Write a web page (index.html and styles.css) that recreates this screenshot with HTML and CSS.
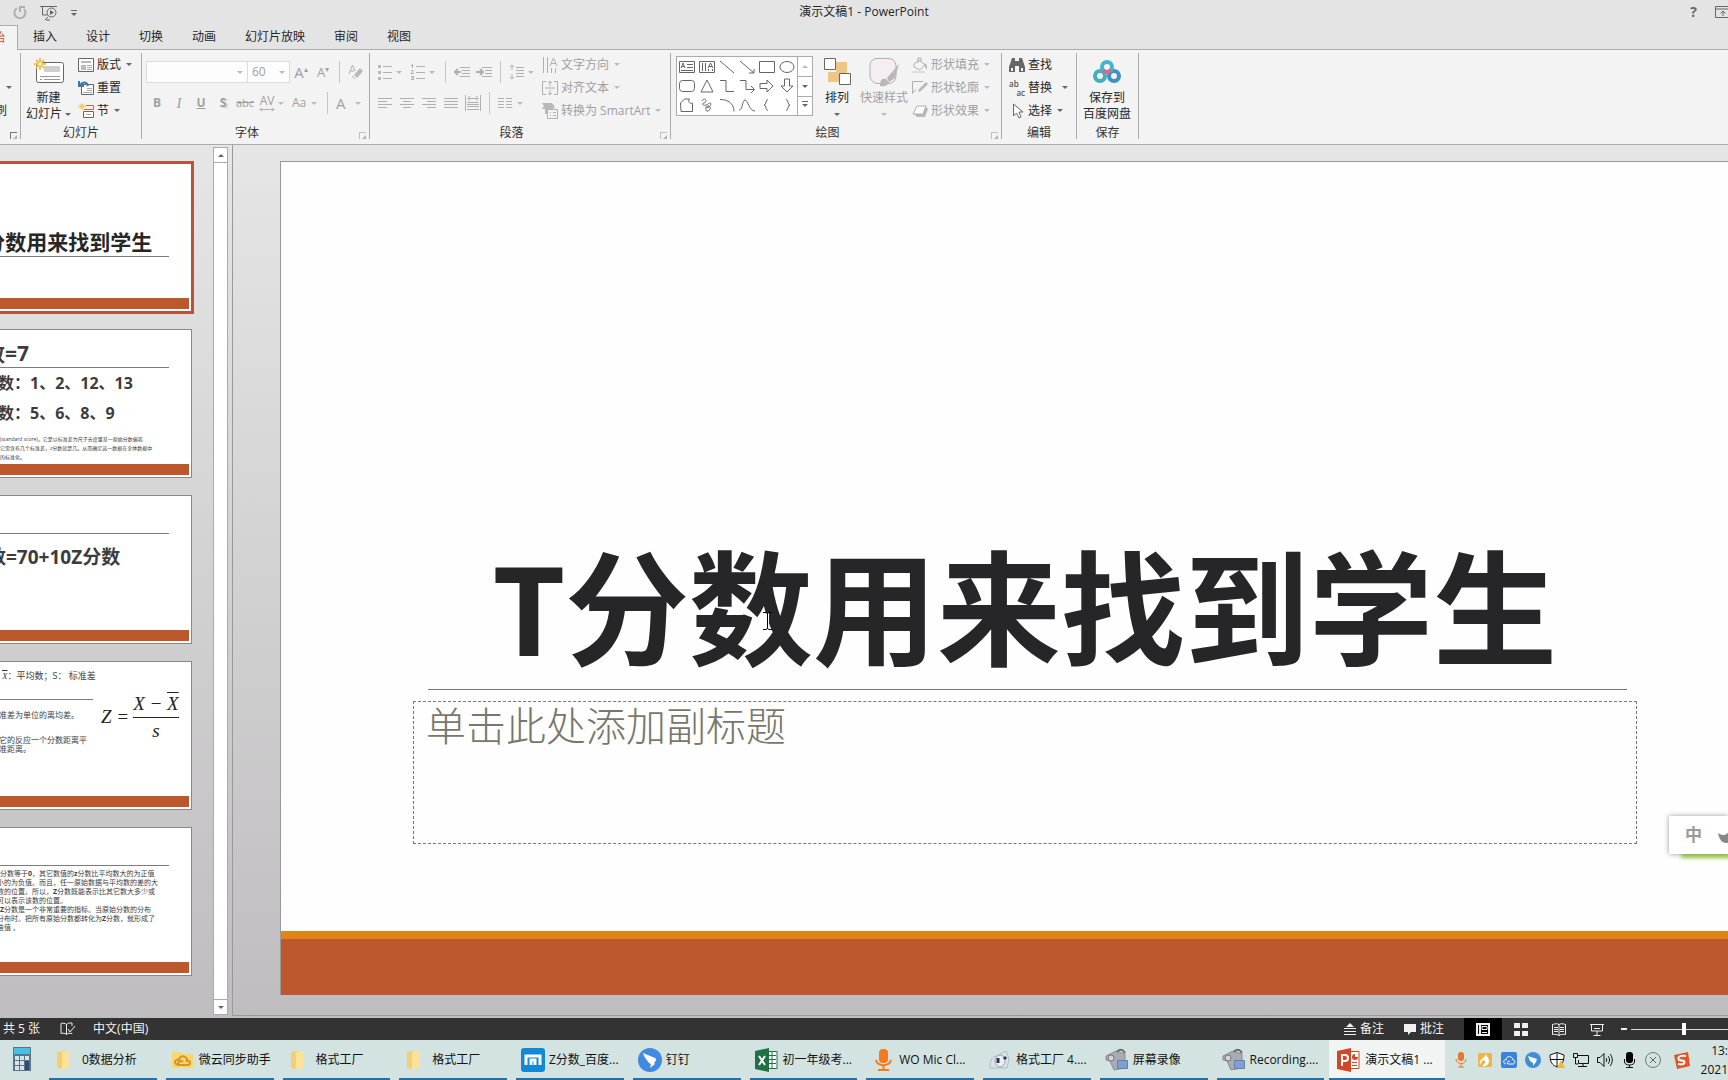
FILE: index.html
```html
<!DOCTYPE html>
<html lang="zh-CN">
<head>
  <meta charset="UTF-8" />
  <meta name="viewport" content="width=device-width, initial-scale=1" />
  <title>演示文稿1 - PowerPoint</title>
  <link rel="stylesheet" href="styles.css">
</head>
<body>
  <header class="titlebar">
    <div class="quick">
      <button aria-label="重复"><svg class="faded" width="16" height="16" viewBox="0 0 16 16"><path d="M5 3A5.500 5.500 0 1 0 12 4" stroke-width="2"/><path d="M8 7V2h5" stroke-width="2"/></svg></button>
      <button aria-label="从头开始"><svg width="18" height="16" viewBox="0 0 18 16"><path d="M0 1.500h17M2.500 2v8h5M5 15l3-3M10 15h-4"/><circle cx="11.500" cy="7.500" r="4.500"/><path class="fill" d="M10 5l4 2.500-4 2.500z"/></svg></button>
      <button aria-label="自定义快速访问工具栏"><svg width="8" height="8" viewBox="0 0 8 8"><path d="M1 1.500h6"/><path class="fill" d="M1 4h6l-3 3z"/></svg></button>
    </div>
    <div class="doc-name">演示文稿1 - PowerPoint</div>
    <div class="window-tools">
      <button class="help" aria-label="帮助">?</button>
      <button aria-label="功能区显示选项"><svg width="16" height="12" viewBox="0 0 16 12"><path d="M.5 .5h15v11H.5zM0 3h16M8 10V5M5.500 7.500L8 5l2.500 2.500"/></svg></button>
    </div>
  </header>

  <nav class="tabs">
    <a href="#" class="active">开始</a>
    <a href="#">插入</a>
    <a href="#">设计</a>
    <a href="#">切换</a>
    <a href="#">动画</a>
    <a href="#">幻灯片放映</a>
    <a href="#">审阅</a>
    <a href="#">视图</a>
  </nav>

  <div class="ribbon">
    <section class="group g-clip">
      <div class="group-body">
        <div class="rows">
          <span></span>
          <button class="cmd" aria-label="复制"><i class="caret"></i></button>
          <button class="cmd brush">格式刷</button>
        </div>
      </div>
      <button class="launcher dark" aria-label="剪贴板选项"></button>
    </section>

    <section class="group g-slides">
      <div class="group-body">
        <button class="big">
          <svg width="32" height="32" viewBox="0 0 32 32"><rect x="3.500" y="6.500" width="27" height="20" rx="2" fill="#fff"/><path fill="#cfcfcf" stroke="none" d="M11 10h16v6H11z"/><path stroke="#999" d="M7 20.500h20M7 23.500h2m2 0h16"/><path stroke="#f0c454" stroke-width="2" d="M7 2v12M1 8h12M3 4l8 8M11 4l-8 8"/><circle cx="7" cy="8" r="2" fill="#fff" stroke="#f0c454"/></svg>
          <span>新建</span>
          <span>幻灯片<i class="caret"></i></span>
        </button>
        <div class="rows">
          <button class="cmd"><svg width="16" height="16" viewBox="0 0 16 16"><path fill="#fff" d="M.5 1.500h15v13H.5z"/><path fill="#bbb" stroke="none" d="M3 4h10v2H3zM3 8h5v5H3z"/><path stroke="#aaa" d="M9 8.500h5M9 10.500h5M9 12.500h5"/></svg>版式<i class="caret"></i></button>
          <button class="cmd"><svg width="16" height="16" viewBox="0 0 16 16"><path fill="#fff" d="M3.500 4.500h12v10h-12z"/><path stroke="#aaa" d="M9 8.500h5M9 10.500h5M5 12.500h9"/><path stroke="#3f76a6" stroke-width="2" d="M10 6C9 2 5 1 2 5M1 1v5h5"/></svg>重置</button>
          <button class="cmd"><svg width="16" height="16" viewBox="0 0 16 16"><path stroke="#f0c454" d="M4 0v7M0 3.500h8M1.500 1l5 5M6.500 1l-5 5"/><path stroke="#c8673c" d="M8 2.500h7.500v4H6"/><path fill="#fff" d="M5.500 8.500h10v6h-10z"/><path stroke="#aaa" d="M8 11.500h5"/></svg>节<i class="caret"></i></button>
        </div>
      </div>
      <h2>幻灯片</h2>
    </section>

    <section class="group g-font has-launcher off">
      <div class="tool-lines">
        <div class="tools">
          <span class="combo font-name"><select aria-label="字体"><option></option></select><i class="caret"></i></span>
          <span class="combo font-size"><select aria-label="字号"><option>60</option></select><i class="caret"></i></span>
          <button class="tb glyph-lg" aria-label="增大字号">A<sup>▴</sup></button>
          <button class="tb glyph-md" aria-label="减小字号">A<sup>▾</sup></button>
          <i class="sep"></i>
          <button class="tb" aria-label="清除格式"><svg width="16" height="16" viewBox="0 0 16 16"><path d="M1 10L4.500 1 7 7M2.500 7H6"/><path class="fill" d="M6 11l6-7 3 3-6 7z"/><path d="M4 12l3 3"/></svg></button>
        </div>
        <div class="tools">
          <button class="tb"><b>B</b></button>
          <button class="tb serif"><em>I</em></button>
          <button class="tb"><b><u>U</u></b></button>
          <button class="tb shadow"><b>S</b></button>
          <button class="tb small"><s>abc</s></button>
          <button class="tb wide av" aria-label="字符间距"><span>AV<svg width="16" height="5" viewBox="0 0 16 5"><path d="M1 2.500h14M3 .5l-2 2 2 2M13 .5l2 2-2 2"/></svg></span><i class="caret"></i></button>
          <button class="tb wide"><span>Aa</span><i class="caret"></i></button>
          <i class="sep"></i>
          <button class="tb wide glyph-lg"><span>A</span><i class="caret"></i></button>
        </div>
      </div>
      <h2>字体</h2>
      <button class="launcher" aria-label="字体选项"></button>
    </section>

    <section class="group g-para has-launcher off">
      <div class="group-body">
        <div class="tool-lines">
          <div class="tools">
            <button class="tb wide" aria-label="项目符号"><svg width="16" height="16" viewBox="0 0 16 16"><path d="M6 2.500h9M6 8.500h9M6 14.500h9"/><path class="fill" d="M1 1h3v3H1zM1 7h3v3H1zM1 13h3v3H1z"/></svg><i class="caret"></i></button>
            <button class="tb wide" aria-label="编号"><svg width="16" height="16" viewBox="0 0 16 16"><path d="M6 2.500h9M6 8.500h9M6 14.500h9M2.500 0v4M1 1.500h1M1 6.500h2v1L1 9.500h3M1 12.500h2.500v3H1M1.500 14H3"/></svg><i class="caret"></i></button>
            <i class="sep"></i>
            <button class="tb" aria-label="降低列表级别"><svg width="16" height="16" viewBox="0 0 16 16"><path d="M6 3.500h10M8 6.500h8M8 9.500h8M6 12.500h10"/><path stroke-width="2" d="M1 8h6M4 5L1 8l3 3"/></svg></button>
            <button class="tb" aria-label="提高列表级别"><svg width="16" height="16" viewBox="0 0 16 16"><path d="M6 3.500h10M9 6.500h7M9 9.500h7M6 12.500h10"/><path stroke-width="2" d="M0 8h6M4 5l3 3-3 3"/></svg></button>
            <i class="sep"></i>
            <button class="tb wide" aria-label="行距"><svg width="16" height="16" viewBox="0 0 16 16"><path d="M7 3.500h8M7 6.500h8M7 9.500h8M7 12.500h8M3 1v5M1 3l2-2 2 2M3 10v5M1 13l2 2 2-2"/></svg><i class="caret"></i></button>
          </div>
          <div class="tools">
            <button class="tb" aria-label="左对齐"><svg width="14" height="12" viewBox="0 0 14 12"><path d="M0 1.500h14M0 4.500h9M0 7.500h14M0 10.500h9"/></svg></button>
            <button class="tb" aria-label="居中"><svg width="14" height="12" viewBox="0 0 14 12"><path d="M0 1.500h14M3 4.500h8M0 7.500h14M3 10.500h8"/></svg></button>
            <button class="tb" aria-label="右对齐"><svg width="14" height="12" viewBox="0 0 14 12"><path d="M0 1.500h14M5 4.500h9M0 7.500h14M5 10.500h9"/></svg></button>
            <button class="tb" aria-label="两端对齐"><svg width="14" height="12" viewBox="0 0 14 12"><path d="M0 1.500h14M0 4.500h14M0 7.500h14M0 10.500h14"/></svg></button>
            <button class="tb" aria-label="分散对齐"><svg width="16" height="16" viewBox="0 0 16 16"><path d="M.5 0v16M15.500 0v16M2 7.500h12M2 9.500h12M2 11.500h12M2 14.500h12M3 3.500h10M5 1L3 3.500 5 6M11 1l2 2.500L11 6"/></svg></button>
            <i class="sep"></i>
            <button class="tb wide" aria-label="分栏"><svg width="14" height="12" viewBox="0 0 14 12"><path d="M0 1.500h6M8 1.500h6M0 4.500h6M8 4.500h6M0 7.500h6M8 7.500h6M0 10.500h6M8 10.500h6"/></svg><i class="caret"></i></button>
          </div>
        </div>
        <div class="rows">
          <button class="cmd"><svg width="16" height="16" viewBox="0 0 16 16"><path d="M1.500 0v16M5.500 0v16M9.500 11v5M13.500 11v5M8 9l3.500-8L15 9M9 6.500h5"/></svg>文字方向<i class="caret"></i></button>
          <button class="cmd"><svg width="16" height="16" viewBox="0 0 16 16"><path d="M4 1.500H.5v13H4M12 1.500h3.500v13H12M3 8h10M8 1v5M6 3l2-2 2 2M8 10v5M6 13l2 2 2-2"/></svg>对齐文本<i class="caret"></i></button>
          <button class="cmd"><svg width="16" height="16" viewBox="0 0 16 16"><path class="fill" d="M0 0h10l3 4-2 2H5v5H3V6H0l2-3z"/><path fill="#f3f3f3" d="M5.500 6.500h10v9h-10z"/><path d="M8 9.500h1M11 9.500h3M8 12.500h1M11 12.500h3"/></svg>转换为 SmartArt<i class="caret"></i></button>
        </div>
      </div>
      <h2>段落</h2>
      <button class="launcher" aria-label="段落选项"></button>
    </section>

    <section class="group g-draw has-launcher">
      <div class="group-body">
        <div class="gallery">
          <div class="shapes">
            <button aria-label="文本框"><svg width="16" height="16" viewBox="0 0 16 16"><path d="M.5 2.500h15v11H.5zM2 9l2-5 2 5M3 7.500h2.500M8 5.500h6M8 8.500h6M2 11.500h12"/></svg></button>
            <button aria-label="竖排文本框"><svg width="16" height="16" viewBox="0 0 16 16"><path d="M.5 2.500h15v11H.5zM3.500 4v8M6.500 4v8M9 9l2.500-5L14 9M10 7.500h3M9.500 10v2M13.500 10v2"/></svg></button>
            <button aria-label="直线"><svg width="16" height="16" viewBox="0 0 16 16"><path d="M1 2l14 12"/></svg></button>
            <button aria-label="箭头"><svg width="16" height="16" viewBox="0 0 16 16"><path d="M1 2l14 12M15 10v4h-5"/></svg></button>
            <button aria-label="矩形"><svg width="16" height="16" viewBox="0 0 16 16"><path d="M.5 2.500h15v11H.5z"/></svg></button>
            <button aria-label="椭圆"><svg width="16" height="16" viewBox="0 0 16 16"><ellipse cx="8" cy="8" rx="7" ry="5.500"/></svg></button>
            <button aria-label="圆角矩形"><svg width="16" height="16" viewBox="0 0 16 16"><rect x=".5" y="2.500" width="15" height="11" rx="3"/></svg></button>
            <button aria-label="三角形"><svg width="16" height="16" viewBox="0 0 16 16"><path d="M8 2l6 12H2z"/></svg></button>
            <button aria-label="肘形连接符"><svg width="16" height="16" viewBox="0 0 16 16"><path d="M1 2.500h6v11h8"/></svg></button>
            <button aria-label="肘形箭头"><svg width="16" height="16" viewBox="0 0 16 16"><path d="M1 2.500h6v9h8M12 8l3.500 3.500L12 15"/></svg></button>
            <button aria-label="右箭头"><svg width="16" height="16" viewBox="0 0 16 16"><path d="M1 5.500h7V2l6 6-6 6v-3.500H1z"/></svg></button>
            <button aria-label="下箭头"><svg width="16" height="16" viewBox="0 0 16 16"><path d="M5.500 1v7H2l6 6 6-6h-3.500V1z"/></svg></button>
            <button aria-label="任意多边形"><svg width="16" height="16" viewBox="0 0 16 16"><path d="M2 14.500L1.500 6l4-4h5c-2 3 0 5 3 4v8.500z"/></svg></button>
            <button aria-label="自由曲线"><svg width="16" height="16" viewBox="0 0 16 16"><path d="M3 4c3-5 6 1 2 2s1 4 4 1 4 1 1 3-4-1-1-1 3 4 0 5-2-4-2-4"/></svg></button>
            <button aria-label="弧形"><svg width="16" height="16" viewBox="0 0 16 16"><path d="M1 2.500c8 0 14 4 14 12"/></svg></button>
            <button aria-label="曲线"><svg width="16" height="16" viewBox="0 0 16 16"><path d="M0 13c4 0 3-10 6-10s4 11 10 11"/></svg></button>
            <button aria-label="左大括号"><svg width="16" height="16" viewBox="0 0 16 16"><path d="M9 2.500C6 2.500 8 8 5 8c3 0 1 5.500 4 5.500"/></svg></button>
            <button aria-label="右大括号"><svg width="16" height="16" viewBox="0 0 16 16"><path d="M7 2.500C10 2.500 8 8 11 8c-3 0-1 5.500-4 5.500"/></svg></button>
          </div>
          <div class="gallery-nav">
            <button class="spent" aria-label="上一行"><i class="caret up"></i></button>
            <button aria-label="下一行"><i class="caret"></i></button>
            <button class="more" aria-label="其他"><i class="caret"></i></button>
          </div>
        </div>
        <button class="big arrange">
          <svg width="32" height="32" viewBox="0 0 32 32"><path fill="#efc586" stroke="none" d="M15 6h11v11H15zM7 16h11v10H7z"/><path fill="#fff" d="M3.500 2.500h11v11h-11zM18.500 17.500h11v11h-11z"/></svg>
          <span>排列</span>
          <span><i class="caret"></i></span>
        </button>
        <button class="big off styles">
          <svg width="32" height="32" viewBox="0 0 32 32"><path d="M8 2.500h12q7 0 8 7v10q0 7-7 8H9q-6-1-7-7V9q0-5 6-6.500z" fill="#f4edf4"/><path class="fill" d="M31 8l-4 14-6 4-2-4zM12 30c0-6 2-8 6-7l3 3c-1 4-5 5-9 4z"/></svg>
          <span>快速样式</span>
          <span><i class="caret"></i></span>
        </button>
        <div class="rows off">
          <button class="cmd"><svg width="16" height="16" viewBox="0 0 16 16"><path d="M2 7l5-4 6 5-5 5-6-3zM6 6V1h3v4"/><path class="fill" d="M12 6l3 2v5l-2-3z"/><path stroke="#ddd" stroke-width="2" d="M0 15h13"/></svg>形状填充<i class="caret"></i></button>
          <button class="cmd"><svg width="16" height="16" viewBox="0 0 16 16"><path d="M11 1.500H.5v12l3-4"/><path class="fill" d="M6 12l1-3 7-7 2 2-7 7z"/></svg>形状轮廓<i class="caret"></i></button>
          <button class="cmd"><svg width="16" height="16" viewBox="0 0 16 16"><path class="fill" d="M2 11l3 3h8l3-8-3-3z"/><path fill="#fff" d="M5 3h9l-3 8H1z"/></svg>形状效果<i class="caret"></i></button>
        </div>
      </div>
      <h2>绘图</h2>
      <button class="launcher" aria-label="绘图选项"></button>
    </section>

    <section class="group g-edit">
      <div class="group-body">
        <div class="rows">
          <button class="cmd"><svg width="16" height="16" viewBox="0 0 16 16"><path class="fill" fill-rule="evenodd" d="M3 1h3v3h4V1h3l3 9v5h-6V9H6v6H0v-5zM2 11v3h2v-3zM12 11v3h2v-3z"/></svg>查找</button>
          <button class="cmd replace"><span class="abac"><span>ab</span><span>ac</span></span>替换<i class="caret"></i></button>
          <button class="cmd"><svg width="16" height="16" viewBox="0 0 16 16"><path fill="#fff" d="M4.500 1v12l3-3 2.500 5 2-1-2-5h4z"/></svg>选择<i class="caret"></i></button>
        </div>
      </div>
      <h2>编辑</h2>
    </section>

    <section class="group g-save">
      <div class="group-body">
        <button class="big">
          <svg width="32" height="32" viewBox="0 0 32 32"><g fill="none" stroke-width="4"><circle cx="9" cy="20" r="5" stroke="#42afc0"/><circle cx="23" cy="20" r="5" stroke="#3d91c6"/><circle cx="16" cy="11" r="5" stroke="#45b5cb"/><path stroke="#d9688e" d="M12 14a5 5 0 0 0 8 0"/></g></svg>
          <span>保存到</span>
          <span>百度网盘</span>
        </button>
      </div>
      <h2>保存</h2>
    </section>
  </div>

  <main class="workspace">
    <aside class="thumbs">
      <div class="thumb selected">
        <p class="t1-title">T分数用来找到学生</p>
        <hr>
        <div class="band"></div>
      </div>
      <div class="thumb t2">
        <p class="head">数=7</p>
        <hr>
        <p class="line">数：1、2、12、13</p>
        <p class="line">数：5、6、8、9</p>
        <div class="tiny">
          <p>(standard score)，它是以标准差为尺子去度量某一原始分数偏离</p>
          <p>它需含有几个标准差，z分数就是几。从而确定这一数据在全体数据中</p>
          <p>的标准化。</p>
        </div>
        <div class="band"></div>
      </div>
      <div class="thumb t3">
        <p class="head"></p>
        <hr>
        <p class="line">数=70+10Z分数</p>
        <div class="band"></div>
      </div>
      <div class="thumb t4">
        <div class="split">
          <div class="notes">
            <p class="head"><em>X</em>：平均数；S： 标准差</p>
            <hr>
            <p>准差为单位的离均差。</p>
            <p>它的反应一个分数距离平<br>准距离。</p>
          </div>
          <div class="formula">
            <span>Z =</span>
            <span class="frac"><span>X − <span class="bar">X</span></span><span>s</span></span>
          </div>
        </div>
        <div class="band"></div>
      </div>
      <div class="thumb t5">
        <p class="head"></p>
        <hr>
        <div class="essay">
          <p>分数等于<b>0</b>，其它数值的<b>z</b>分数比平均数大的为正值</p>
          <p>小的为负值。而且，任一原始数据与平均数的差的大</p>
          <p>数的位置。所以，<b>Z</b>分数既能表示比其它数大多少或</p>
          <p>可以表示该数的位置。</p>
          <p><b>Z</b>分数是一个非常重要的指标。当原始分数的分布</p>
          <p>分布时。把所有原始分数都转化为<b>Z</b>分数，就形成了</p>
          <p>准值 。</p>
        </div>
        <div class="band"></div>
      </div>
    </aside>

    <div class="scrollbar">
      <button aria-label="向上滚动"><i class="caret up"></i></button>
      <div class="track"></div>
      <button aria-label="向下滚动"><i class="caret"></i></button>
    </div>

    <div class="editor">
      <article class="slide">
        <div class="slide-content">
          <h1>T分数用来找到学生</h1>
          <hr>
          <div class="subtitle">单击此处添加副标题</div>
        </div>
        <footer></footer>
        <svg class="ibeam" width="9" height="18" viewBox="0 0 9 18"><path stroke="#fff" stroke-width="3" d="M4.500 1v16"/><path stroke="#000" d="M0 .5h3l1.500 1L6 .5h3M4.500 1v16M0 17.500h3l1.500-1 1.500 1h3"/></svg>
      </article>
    </div>

    <div class="ime">
      <span>中</span>
      <svg width="24" height="20" viewBox="0 0 24 20"><path fill="#888" stroke="none" d="M1 8c6 4 11 2 11-5 8 6 3 15-3 15-4 0-7-4-8-10z"/></svg>
    </div>
  </main>

  <div class="status">
    <span>共 5 张</span>
    <button class="spell" aria-label="拼写检查"><svg width="16" height="14" viewBox="0 0 16 14"><path d="M6.500 12.500C5 11 3 11 1 11.500v-10c2-.5 4-.5 5.500 1zv-10C8 1 9 1 12 1v3M6.500 12.500C8 11 9 11 12 11.500V11M8 7l2 3 5-6"/></svg></button>
    <span>中文(中国)</span>
    <div class="status-right">
      <button class="label"><svg width="12" height="12" viewBox="0 0 12 12"><path d="M0 5.500h12M0 8.500h12M0 11.500h12"/><path class="fill" d="M2 4l4-4 4 4z"/></svg>备注</button>
      <button class="label"><svg width="12" height="12" viewBox="0 0 12 12"><path class="fill" d="M0 1h12v8H7l-3 3V9H0z"/></svg>批注</button>
      <div class="views">
        <button class="on" aria-label="普通视图"><svg width="14" height="13" viewBox="0 0 14 13"><path stroke-width="2" d="M1 1h12v11H1zM4 1v11"/><path d="M6 3.500h5v3H6zM6 9.500h5"/></svg></button>
        <button aria-label="幻灯片浏览"><svg width="14" height="13" viewBox="0 0 14 13"><path class="fill" d="M0 0h6v5H0zM8 0h6v5H8zM0 8h6v5H0zM8 8h6v5H8z"/></svg></button>
        <button aria-label="阅读视图"><svg width="14" height="13" viewBox="0 0 14 13"><path d="M.5 1.500c3-1 5-1 6.500 0 1.500-1 4-1 6.500 0v10c-3-.5-5 0-6.500 1-1.500-1-4-1.500-6.500-1zM7 1v12M2 4.500h4M2 6.500h4M2 8.500h4M8 4.500h4M8 6.500h4M8 8.500h4"/></svg></button>
        <button aria-label="幻灯片放映"><svg width="14" height="13" viewBox="0 0 14 13"><path d="M0 1.500h14M1.500 2v6h11V2M4 5.500h6M7 8v4M3.500 12.500h7"/></svg></button>
      </div>
      <button class="minus" aria-label="缩小"></button>
      <input type="range" class="zoom" aria-label="显示比例" value="50">
    </div>
  </div>

  <div class="taskbar">
    <button class="calc" aria-label="计算器"><svg width="18" height="24" viewBox="0 0 18 24"><path fill="#5d7387" stroke="none" d="M0 0h18v24H0z"/><path fill="#46c1e3" stroke="none" d="M1 1h16v6H1z"/><path fill="#d8e4ec" stroke="none" d="M2 9h4v4H2zM7 9h4v4H7zM2 14h4v4H2zM7 14h4v4H7zM2 19h4v4H2zM7 19h4v4H7zM12 9h4v4h-4z"/><path fill="#2a4d73" stroke="none" d="M12 14h4v9h-4z"/></svg></button>
    <div class="apps">
      <button><svg class="flat" width="24" height="24" viewBox="0 0 24 24"><path fill="#f3cf72" d="M3 4l6-1v18l-6-1z"/><path fill="#fbe29b" d="M8 5l4-2h3v17l-4 1H8z"/></svg>0数据分析</button>
      <button><svg width="24" height="24" viewBox="0 0 24 24"><path fill="#fad76c" stroke="none" d="M1 4h9l2 2h10v14H1z"/><path stroke="#d39429" stroke-width="2" d="M7 17c-5-1-3-7 1-5 1-6 9-4 8 1 4-1 4 4 0 4H8c-3-2 2-6 4-3"/></svg>微云同步助手</button>
      <button><svg class="flat" width="24" height="24" viewBox="0 0 24 24"><path fill="#f3cf72" d="M3 4l6-1v18l-6-1z"/><path fill="#fbe29b" d="M8 5l4-2h3v17l-4 1H8z"/></svg>格式工厂</button>
      <button><svg class="flat" width="24" height="24" viewBox="0 0 24 24"><path fill="#f3cf72" d="M3 4l6-1v18l-6-1z"/><path fill="#fbe29b" d="M8 5l4-2h3v17l-4 1H8z"/></svg>格式工厂</button>
      <button><svg width="24" height="24" viewBox="0 0 24 24"><rect width="24" height="24" rx="3" fill="#1189d5" stroke="none"/><path stroke="#fff" stroke-width="3" d="M5 17V8h14v9M10 17v-5h4v5"/></svg>Z分数_百度...</button>
      <button><svg class="flat" width="24" height="24" viewBox="0 0 24 24"><circle cx="12" cy="12" r="12" fill="#418ae0"/><path fill="#fff" d="M5 5l12 5c2 1 1 3-1 5l1 1-5 4 1-4-2-1-3-4-2-3z"/></svg>钉钉</button>
      <button><svg width="24" height="24" viewBox="0 0 24 24"><path fill="#fff" stroke="#207245" d="M11 3.500h11v17H11zM13 7.500h8M13 11.500h8M13 15.500h8M17 4v16"/><path fill="#207245" stroke="none" d="M0 3l14-3v24L0 21z"/><path stroke="#fff" stroke-width="2" d="M4 8l6 9M10 8l-6 9"/></svg>初一年级考...</button>
      <button><svg width="24" height="24" viewBox="0 0 24 24"><rect x="8" y="1" width="9" height="14" rx="4" fill="#f47a20" stroke="none"/><path stroke="#f47a20" stroke-width="2" d="M5 12c1 7 14 7 15 0M12.500 17v5M7 22h11"/></svg>WO Mic Cl...</button>
      <button><svg width="24" height="24" viewBox="0 0 24 24"><path fill="#dde2ea" stroke="#b4b8c6" d="M2 20c0-9 2-11 7-12l9-5 3 8-2 9z"/><ellipse cx="12" cy="13" rx="5" ry="6" fill="#e9eef4" stroke="#9aa2b4"/><path stroke="#30364a" stroke-width="3" d="M10 10v5M16 9l2 2"/></svg>格式工厂 4....</button>
      <button><svg width="24" height="24" viewBox="0 0 24 24"><path fill="#a9abb3" stroke="#8b8d95" d="M1 8l10-5 9 3v14l-11 2-4-9-4-1z"/><circle cx="6" cy="10" r="3" fill="#d4d4d8" stroke="#777"/><path stroke="#66686e" stroke-width="2" d="M12 4c2-3 6-3 8 1"/><path fill="#7f9fd0" stroke="#6680ad" d="M12.500 12.500h10v8h-10z"/></svg>屏幕录像</button>
      <button><svg width="24" height="24" viewBox="0 0 24 24"><path fill="#a9abb3" stroke="#8b8d95" d="M1 8l10-5 9 3v14l-11 2-4-9-4-1z"/><circle cx="6" cy="10" r="3" fill="#d4d4d8" stroke="#777"/><path stroke="#66686e" stroke-width="2" d="M12 4c2-3 6-3 8 1"/><path fill="#7f9fd0" stroke="#6680ad" d="M12.500 12.500h10v8h-10z"/></svg>Recording....</button>
      <button class="current"><svg width="24" height="24" viewBox="0 0 24 24"><path fill="#fff" stroke="#d24726" d="M11 3.500h11v17H11zM15 14.500h5M15 17.500h5"/><path fill="#d24726" stroke="none" d="M0 3l14-3v24L0 21zM18 6a3 3 0 1 0 3 3h-3z"/><path stroke="#fff" stroke-width="2" d="M5 18V7h3c4 0 4 6 0 6H5"/></svg>演示文稿1 ...</button>
    </div>
    <div class="tray">
      <button aria-label="WO Mic"><svg width="16" height="16" viewBox="0 0 16 16"><rect x="5" y="0" width="6" height="9" rx="3" fill="#e8762c" stroke="none"/><path stroke="#e8762c" d="M3 7c0 6 10 6 10 0M8 11v4M5 15h6"/></svg></button>
      <button aria-label="安全"><svg class="flat" width="16" height="16" viewBox="0 0 16 16"><rect x="1" y="1" width="14" height="14" rx="2" fill="#efb34a"/><path fill="#fff" d="M9 1c0 4 3 4 3 8s-4 6-7 5c3-2 4-4 2-6-3 1-3 4-4 5-2-6 6-7 6-12z"/></svg></button>
      <button aria-label="微云"><svg width="16" height="16" viewBox="0 0 16 16"><rect width="16" height="16" rx="2" fill="#3b82dc" stroke="none"/><path stroke="#fff" d="M5 12c-4-1-2-5 0-4 0-5 7-4 7 0 3 0 2 4 0 4H7c-2-2 1-4 2-2"/></svg></button>
      <button aria-label="钉钉"><svg class="flat" width="16" height="16" viewBox="0 0 16 16"><circle cx="8" cy="8" r="8" fill="#418ed8"/><path fill="#fff" d="M3 4l9 3-1 3-3 4v-3L5 9z"/></svg></button>
      <button aria-label="安全中心"><svg width="16" height="16" viewBox="0 0 16 16"><path fill="#fff" stroke="#111" d="M8 .5l7 2.500c0 7-2 10-7 12C3 13 1 10 1 3zM8 1v14M1 7.500h14"/><path fill="#f0b93b" stroke="none" d="M12 8l4 8H8z"/></svg></button>
      <button aria-label="网络"><svg width="16" height="16" viewBox="0 0 16 16"><path stroke="#111" d="M5 3.500h10.500v8H5.500V8M10 12v3M5 14.500h9M.5 1.500h4v4h-4zM2.500 6v6H5"/></svg></button>
      <button aria-label="音量"><svg width="16" height="16" viewBox="0 0 16 16"><path stroke="#111" d="M.5 5.500H3l4-4v13l-4-4H.5zM9 6c1 1 1 3 0 4M11 4c2 2 2 6 0 8M13 2c3 3 3 9 0 12"/></svg></button>
      <button aria-label="麦克风"><svg width="16" height="16" viewBox="0 0 16 16"><rect x="5" y="0" width="7" height="11" rx="3" fill="#000" stroke="none"/><path stroke="#111" d="M3.500 7v3c0 4 10 4 10 0V7M8.500 13v2M5 15.500h7"/></svg></button>
      <button aria-label="已断开"><svg width="16" height="16" viewBox="0 0 16 16"><circle cx="8" cy="8" r="7.500" stroke="#777"/><path stroke="#666" d="M5 5l6 6M11 5l-6 6"/></svg></button>
      <button class="sogou" aria-label="搜狗输入法"><svg width="17" height="17" viewBox="0 0 17 17"><path fill="#e65327" stroke="none" d="M1 3l14-3 2 14-13 3z"/><path stroke="#fff" stroke-width="2" d="M13 4C7 3 4 5 6 8l5 1c2 3-2 4-6 3"/></svg></button>
      <div class="clock">13:<br>2021</div>
    </div>
  </div>
</body>
</html>
```
FILE: styles.css
```css
:root {
  --chrome: #e4e4e4;
  --ribbon: #f3f3f3;
  --line: #ababab;
  --text: #262626;
  --muted: #a0a0a0;
  --brand: #bd582c;
  --gold: #e28319;
  --task: #d2e3e1;
}

* {
  box-sizing: border-box;
}

body {
  margin: 0;
  height: 100vh;
  display: flex;
  flex-direction: column;
  overflow: hidden;
  font-family: "Open Sans", "Noto Sans CJK SC", sans-serif;
  font-size: 12px;
  line-height: 16px;
  color: var(--text);
  background: var(--chrome);
}

button,
select {
  font: inherit;
  color: inherit;
  background: none;
  border: none;
  padding: 0;
  margin: 0;
  white-space: nowrap;
}

p,
h1,
h2,
hr {
  margin: 0;
}

a {
  color: inherit;
  text-decoration: none;
  white-space: nowrap;
}

svg {
  display: block;
  flex: none;
  fill: none;
  stroke: #666;
}

.fill {
  fill: #666;
  stroke: none;
}

.flat {
  stroke: none;
}

.off {
  color: var(--muted);
}

.off svg,
.faded {
  stroke: #b0b0b0;
}

.off .fill {
  fill: #b8b8b8;
}

.caret {
  flex: none;
  display: inline-block;
  border: 3px solid transparent;
  border-top-color: #666;
  border-bottom: none;
}

.caret.up {
  border-top: none;
  border-bottom: 3px solid #666;
}

.off .caret {
  border-top-color: #bbb;
}

.spent .caret {
  border-bottom-color: #bbb;
}

/* title bar */
.titlebar {
  height: 25px;
  flex: none;
  display: grid;
  grid-template-columns: 1fr auto 1fr;
  align-items: center;
}

.quick {
  display: flex;
  align-items: center;
  gap: 12px;
  padding-left: 12px;
}

.doc-name {
  padding-bottom: 2px;
}

.window-tools {
  display: flex;
  align-items: center;
  justify-content: flex-end;
  gap: 18px;
  margin-right: -3px;
  padding-bottom: 2px;
}

.help {
  font-size: 14px;
  font-weight: 700;
  color: #666;
}

/* tabs */
.tabs {
  height: 25px;
  flex: none;
  display: flex;
  gap: 29px;
  border-bottom: 1px solid var(--line);
}

.tabs a {
  line-height: 23px;
}

.tabs .active {
  width: 18px;
  height: 25px;
  margin-right: -14px;
  padding-right: 12px;
  display: flex;
  justify-content: flex-end;
  color: #d04424;
  background: var(--ribbon);
  border: 1px solid var(--line);
  border-width: 1px 1px 0 0;
}

/* ribbon */
.ribbon {
  height: 95px;
  flex: none;
  display: flex;
  padding: 3px 0 5px;
  background: var(--ribbon);
  border-bottom: 1px solid var(--line);
}

.group {
  position: relative;
  flex: none;
  display: flex;
  flex-direction: column;
  border-right: 1px solid var(--line);
}

.group-body {
  display: flex;
}

.group h2 {
  margin-top: auto;
  font-size: 12px;
  line-height: 12px;
  font-weight: 400;
  text-align: center;
  color: #333;
}

.has-launcher h2 {
  padding-right: 17px;
}

.g-clip { width: 21px; }
.g-slides { width: 121px; }
.g-font { width: 228px; }
.g-para { width: 301px; }
.g-draw { width: 331px; }
.g-edit { width: 75px; }
.g-save { width: 62px; }

.launcher {
  position: absolute;
  right: 3px;
  bottom: 0;
  width: 7px;
  height: 7px;
  border: 1px solid #c0c0c0;
  border-width: 1px 0 0 1px;
}

.launcher::after {
  content: "";
  position: absolute;
  right: 0;
  bottom: 0;
  border: 2px solid #b0b0b0;
  border-top-color: transparent;
  border-left-color: transparent;
}

.launcher.dark {
  border-color: #777;
}

.rows {
  display: grid;
  grid-template-rows: repeat(3, 23px);
  justify-items: start;
}

.cmd {
  display: flex;
  align-items: center;
  gap: 3px;
}

.cmd .caret {
  margin-left: 2px;
}

.g-clip .rows {
  grid-template-columns: 12px;
  justify-items: end;
}

.brush {
  padding-right: 5px;
}

.big {
  display: flex;
  flex-direction: column;
  align-items: center;
  padding: 3px 4px 0 5px;
}

.big svg {
  margin-bottom: 2px;
}

.big span {
  display: flex;
  align-items: center;
  gap: 3px;
  height: 16px;
}

.g-slides .rows {
  margin-left: 3px;
}

.g-save .group-body {
  justify-content: center;
}

.g-save .big {
  padding: 3px 5px 0 4px;
}

.g-edit .rows {
  padding-left: 7px;
}

.replace .caret {
  margin-left: 7px;
}

.abac {
  width: 16px;
  display: flex;
  flex-direction: column;
  font-size: 8px;
  line-height: 9px;
  font-weight: 600;
  text-align: left;
  color: #555;
}

.abac span + span {
  text-align: right;
}

.tool-lines {
  padding: 8px 0 0 4px;
}

.tools {
  height: 22px;
  display: flex;
  align-items: center;
  margin-bottom: 9px;
}

.tb {
  width: 22px;
  height: 22px;
  display: flex;
  align-items: center;
  justify-content: center;
}

.tb.wide {
  width: 33px;
  justify-content: space-between;
  padding: 0 5px 0 3px;
}

.tb.small {
  font-size: 11px;
}

.tb.serif {
  font-family: "Liberation Serif", serif;
  font-size: 15px;
}

.tb sup {
  font-size: 8px;
  line-height: 8px;
  padding-bottom: 6px;
}

.shadow {
  text-shadow: 2px 1px 1px #ccc;
}

.av span {
  display: flex;
  flex-direction: column;
  line-height: 12px;
}

.glyph-lg {
  font-size: 15px;
}

.glyph-md {
  font-size: 13px;
}

.sep {
  width: 1px;
  height: 22px;
  margin: 0 5px;
  background: #c6c6c6;
}

.combo {
  position: relative;
  height: 22px;
  border: 1px solid #dcdcdc;
  background: #fdfdfd;
}

.combo select {
  appearance: none;
  width: 100%;
  height: 20px;
  padding-left: 4px;
}

.combo .caret {
  position: absolute;
  right: 4px;
  top: 9px;
}

.font-name {
  width: 102px;
}

.font-size {
  width: 43px;
  margin-left: -1px;
}

.g-para .rows {
  margin-left: 3px;
}

/* shape gallery */
.gallery {
  display: flex;
  height: 60px;
  margin: 3px 3px 0 5px;
  border: 1px solid var(--line);
  background: #fff;
}

.shapes {
  display: grid;
  grid-template-columns: repeat(6, 20px);
  place-items: center;
}

.gallery-nav {
  width: 15px;
  display: grid;
  grid-template-rows: repeat(3, 1fr);
  border-left: 1px solid var(--line);
}

.gallery-nav button {
  display: flex;
  align-items: center;
  justify-content: center;
}

.gallery-nav button + button {
  border-top: 1px solid var(--line);
}

.gallery-nav .more::before {
  content: "";
  position: absolute;
  width: 6px;
  height: 1px;
  margin-top: -8px;
  background: #666;
}

.styles {
  padding-left: 3px;
}

/* workspace */
.workspace {
  position: relative;
  flex: 1;
  min-height: 0;
  display: flex;
  overflow: hidden;
  background: linear-gradient(#e6e6e6, #bfbdbf);
}

.thumbs {
  width: 213px;
  flex: none;
  display: flex;
  flex-direction: column;
  gap: 17px;
  padding-top: 18px;
  overflow: hidden;
}

.thumb {
  width: 265px;
  height: 149px;
  flex: none;
  margin-left: -73px;
  padding: 0 0 2px 72px;
  display: flex;
  flex-direction: column;
  border: 1px solid #888;
  background: #fff;
  color: #3c3c3c;
  white-space: nowrap;
}

.thumb.selected {
  border-color: #b9533c;
  outline: 2px solid #b9533c;
}

.thumb hr {
  width: 169px;
  flex: none;
  border: none;
  border-top: 1px solid #7c7c7c;
}

.band {
  height: 11px;
  flex: none;
  margin: auto 2px 0 -72px;
  background: var(--brand);
}

.head {
  height: 37px;
  flex: none;
}

.t1-title {
  margin: 65px 0 1px -28px;
  font-size: 21px;
  line-height: 26px;
  font-weight: 700;
  color: #262626;
}

.t2 .head {
  margin-left: -16px;
  padding-top: 9px;
  font-size: 21px;
  line-height: 28px;
  font-weight: 700;
}

.t2 .line {
  margin-left: -2px;
  font-size: 16px;
  line-height: 30px;
  font-weight: 700;
}

.tiny {
  font-size: 5px;
  line-height: 9px;
  padding-top: 7px;
}

.t3 .line {
  margin-left: -13px;
  padding-top: 8px;
  font-size: 19px;
  line-height: 30px;
  font-weight: 700;
}

.split {
  display: flex;
}

.notes {
  width: 94px;
  margin-left: -1px;
  font-size: 8px;
  line-height: 9px;
}

.notes .head {
  padding: 8px 0 0 3px;
  font-size: 9px;
  line-height: 12px;
}

.notes .head em {
  font-family: "Liberation Serif", serif;
  text-decoration: overline;
}

.notes hr {
  width: 94px;
}

.notes p + p,
.notes hr + p {
  padding-top: 10px;
}

.notes hr + p + p {
  padding-top: 16px;
}

.formula {
  display: flex;
  align-items: center;
  gap: 4px;
  height: 54px;
  margin: 28px 0 0 8px;
  font: italic 19px/26px "Liberation Serif", serif;
  color: #222;
}

.frac {
  display: flex;
  flex-direction: column;
  align-items: center;
}

.frac > span:first-child {
  border-bottom: 1px solid #222;
}

.bar {
  text-decoration: overline;
}

.essay {
  padding-top: 3px;
  font-size: 7px;
  line-height: 9px;
}

.essay p:nth-child(2),
.essay p:nth-child(3),
.essay p:nth-child(4),
.essay p:nth-child(6),
.essay p:nth-child(7) {
  margin-left: -3px;
}

.scrollbar {
  width: 15px;
  flex: none;
  display: flex;
  flex-direction: column;
  margin: 2px 4px 3px 0;
  border: 1px solid var(--line);
  background: #fff;
}

.scrollbar button {
  height: 14px;
  display: flex;
  align-items: center;
  justify-content: center;
}

.track {
  flex: 1;
  border: 1px solid var(--line);
  border-width: 1px 0;
}

.editor {
  flex: 1;
  min-width: 0;
  display: flex;
  margin-bottom: 2px;
  padding: 16px 0 20px 47px;
  border-left: 1px solid #999;
  border-bottom: 1px solid #999;
}

.slide {
  position: relative;
  flex: 1;
  display: flex;
  flex-direction: column;
  margin-right: -35px;
  background: #fefefe;
  border: 1px solid #999;
  border-bottom: none;
}

.slide-content {
  margin-top: auto;
  padding: 0 125px 87px 132px;
}

.slide h1 {
  margin-bottom: 11px;
  font-size: 124px;
  line-height: 140px;
  font-weight: 700;
  text-align: center;
  white-space: nowrap;
  color: #262628;
}

.slide hr {
  margin: 0 10px 11px 15px;
  border: none;
  border-top: 1px solid #777;
}

.subtitle {
  height: 143px;
  padding: 0 12px;
  border: 1px dashed #777;
  font-size: 40px;
  line-height: 48px;
  font-weight: 300;
  color: #77776a;
}

.slide footer {
  height: 64px;
  background: var(--brand);
  border-top: 8px solid var(--gold);
}

.ibeam {
  position: absolute;
  left: 482px;
  top: 450px;
}

.ime {
  position: absolute;
  right: 0;
  top: 671px;
  width: 59px;
  height: 38px;
  display: flex;
  align-items: center;
  gap: 15px;
  padding-left: 16px;
  background: #fff;
  box-shadow: 0 0 5px #999, 10px 6px 4px -2px #9bcf3a;
  font-size: 17px;
  font-weight: 700;
  color: #999;
}

/* status bar */
.status {
  height: 22px;
  flex: none;
  display: flex;
  align-items: center;
  padding-left: 3px;
  background: #333;
  color: #f4f4f4;
}

.status svg {
  stroke: #f0f0f0;
}

.status .fill {
  fill: #f0f0f0;
}

.spell {
  margin: 0 17px 0 20px;
}

.status-right {
  margin-left: auto;
  display: flex;
  align-items: center;
}

.label {
  display: flex;
  align-items: center;
  gap: 4px;
  margin-right: 20px;
}

.views {
  display: flex;
}

.views button {
  width: 38px;
  height: 22px;
  display: flex;
  align-items: center;
  justify-content: center;
}

.views .on {
  background: #000;
}

.minus {
  width: 6px;
  height: 2px;
  margin: 0 4px 0 5px;
  background: #f0f0f0;
}

.zoom {
  appearance: none;
  width: 106px;
  height: 12px;
  margin: 0 -9px 0 0;
  background: linear-gradient(#ddd, #ddd) center / 100% 1px no-repeat;
}

.zoom::-webkit-slider-thumb {
  appearance: none;
  width: 4px;
  height: 12px;
  background: #fff;
}

/* taskbar */
.taskbar {
  height: 40px;
  flex: none;
  display: flex;
  align-items: stretch;
  background: var(--task);
  color: #111;
}

.calc {
  padding: 0 18px 2px 13px;
}

.apps {
  flex: 1;
  min-width: 0;
  display: flex;
  gap: 9px;
}

.apps button {
  flex: 1 1 108px;
  min-width: 0;
  display: flex;
  align-items: center;
  gap: 4px;
  padding: 2px 0 0 5px;
  overflow: hidden;
  border-bottom: 2px solid #1f72b0;
}

.apps .current {
  flex-basis: 116px;
  margin-left: -4px;
  padding-left: 8px;
  background: #f0f5f4;
}

.tray {
  width: 283px;
  flex: none;
  display: flex;
  align-items: center;
  gap: 8px;
  padding-left: 8px;
}

.sogou {
  margin-left: 4px;
}

.clock {
  margin-left: auto;
  line-height: 19px;
  text-align: right;
}
```
